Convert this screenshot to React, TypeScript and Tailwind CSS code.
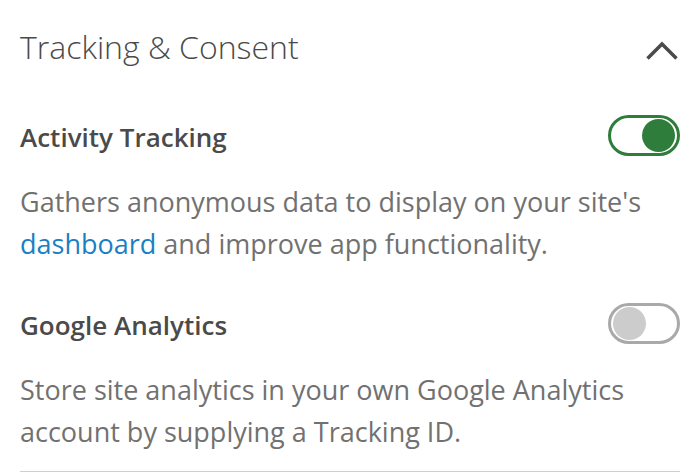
import React, { useState } from "react";

function Toggle({ on, onChange }: { on: boolean; onChange: () => void }) {
  return (
    <button
      type="button"
      onClick={onChange}
      className={
        on
          ? "flex h-[41px] w-[72px] shrink-0 items-center justify-end rounded-full border-[3px] border-[#2f7d3b] bg-white px-[2px]"
          : "flex h-[41px] w-[72px] shrink-0 items-center justify-start rounded-full border-[3px] border-[#a9a9a9] bg-white px-[2px]"
      }
    >
      <span
        className={
          on
            ? "h-[33px] w-[33px] rounded-full bg-[#2f7d3b]"
            : "h-[33px] w-[33px] rounded-full bg-[#cccccc]"
        }
      />
    </button>
  );
}

function Setting({
  title,
  on,
  onChange,
  children,
}: {
  title: string;
  on: boolean;
  onChange: () => void;
  children: React.ReactNode;
}) {
  return (
    <div className="flex flex-col">
      <div className="flex h-[41px] items-center justify-between">
        <span className="pt-[3px] text-[26px] leading-[36px] font-semibold text-[#4a4a4a]">{title}</span>
        <Toggle on={on} onChange={onChange} />
      </div>
      <p className="mt-[25px] text-[27px] leading-[42px] text-[#717171]">{children}</p>
    </div>
  );
}

export default function App() {
  const [activity, setActivity] = useState(true);
  const [analytics, setAnalytics] = useState(false);

  return (
    <div
      className="h-[472px] w-[700px] overflow-hidden bg-white px-[20px]"
      style={{ fontFamily: "'Open Sans', sans-serif" }}
    >
      <div className="flex h-[40px] items-center justify-between mt-[27px]">
        <h2 className="text-[32px] leading-[40px] font-light text-[#4a4a4a]">Tracking &amp; Consent</h2>
        <svg width="34" height="22" viewBox="0 0 34 22" className="mr-[1px] mt-[6px]">
          <path d="M2.5 19.5 L17 5 L31.5 19.5" fill="none" stroke="#4a4a4a" strokeWidth="3.5" />
        </svg>
      </div>
      <div className="mt-[48px] flex flex-col gap-[38px]">
        <Setting title="Activity Tracking" on={activity} onChange={() => setActivity(!activity)}>
          Gathers anonymous data to display on your site's{" "}
          <a className="text-[#1a7fc4]" href="#">
            dashboard
          </a>{" "}
          and improve app functionality.
        </Setting>
        <Setting title="Google Analytics" on={analytics} onChange={() => setAnalytics(!analytics)}>
          Store site analytics in your own Google Analytics account by supplying a Tracking ID.
        </Setting>
      </div>
      <div className="mt-[18px] h-px bg-[#cfcfcf]" />
    </div>
  );
}
